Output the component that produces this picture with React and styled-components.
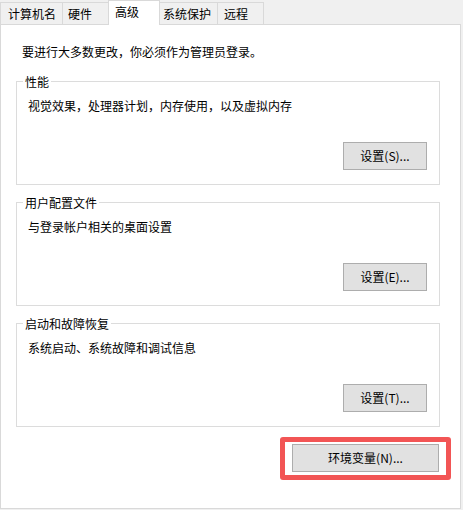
import React from 'react';
import styled, { createGlobalStyle } from 'styled-components';

const GlobalStyle = createGlobalStyle`
  html, body {
    margin: 0;
    padding: 0;
    background: #f0f0f0;
  }
  body {
    font-family: "Noto Sans CJK SC", "Noto Sans", sans-serif;
    font-size: 12px;
    color: #000;
    width: 463px;
    height: 510px;
    overflow: hidden;
  }
`;

// Tab strip across the top
const TabBar = styled.div`
  display: flex;
  align-items: flex-end;
  height: 24px;
`;

const Tab = styled.div`
  box-sizing: border-box;
  width: ${(p) => p.$width}px;
  margin-left: ${(p) => (p.$first ? 0 : -1)}px;
  padding-left: ${(p) => p.$pad ?? 6}px;
  border: 1px solid #d9d9d9;
  border-bottom: none;
  white-space: nowrap;
  background: ${(p) => (p.$active ? '#fff' : '#f0f0f0')};
  height: ${(p) => (p.$active ? 25 : 22)}px;
  line-height: ${(p) => (p.$active ? 22 : 21)}px;
  margin-bottom: ${(p) => (p.$active ? -1 : 0)}px;
  position: relative;
  z-index: ${(p) => (p.$active ? 1 : 0)};
`;

const Panel = styled.div`
  box-sizing: border-box;
  width: 461px;
  height: 485px;
  background: #fff;
  border: 1px solid #d9d9d9;
  padding: 19px 20px 0 15px;
  display: flex;
  flex-direction: column;
`;

const Intro = styled.div`
  line-height: 16px;
  padding-left: 6px;
  margin-bottom: 13px;
`;

const Group = styled.fieldset`
  margin: 0 0 ${(p) => (p.$last ? 0 : 9)}px 0;
  padding: 0 12px 14px 6px;
  min-width: 0;
  border: 1px solid #dcdcdc;
  display: flex;
  flex-direction: column;
`;

const Legend = styled.legend`
  padding: 0 2px;
  line-height: 17px;
`;

const Desc = styled.div`
  margin-top: 8px;
  padding-left: 5px;
  line-height: 16px;
`;

const Button = styled.button`
  box-sizing: border-box;
  height: 28px;
  width: ${(p) => p.$width || 84}px;
  background: #e1e1e1;
  border: 1px solid #adadad;
  border-radius: 0;
  font-family: inherit;
  font-size: 12px;
  color: #000;
  padding: 0;
  line-height: 26px;
`;

const GroupButton = styled(Button)`
  align-self: flex-end;
  margin-top: 28px;
`;

// red annotation frame around the env button
const Highlight = styled.div`
  align-self: flex-end;
  margin: 10px -11px 0 0;
  border: 5px solid #f25555;
  border-radius: 3px;
  padding: 2px 7px 3px 7px;
  display: flex;
`;

const tabs = [
  { label: '计算机名', width: 63, pad: 7 },
  { label: '硬件', width: 47, pad: 5 },
  { label: '高级', width: 52, active: true },
  { label: '系统保护', width: 59, pad: 3 },
  { label: '远程', width: 47 },
];

const groups = [
  { title: '性能', desc: '视觉效果，处理器计划，内存使用，以及虚拟内存', button: '设置(S)...' },
  { title: '用户配置文件', desc: '与登录帐户相关的桌面设置', button: '设置(E)...' },
  { title: '启动和故障恢复', desc: '系统启动、系统故障和调试信息', button: '设置(T)...' },
];

const App = () => (
  <>
    <GlobalStyle />
    <TabBar>
      {tabs.map((t, i) => (
        <Tab key={t.label} $first={i === 0} $width={t.width} $pad={t.pad} $active={t.active}>
          {t.label}
        </Tab>
      ))}
    </TabBar>
    <Panel>
      <Intro>要进行大多数更改，你必须作为管理员登录。</Intro>
      {groups.map((g, i) => (
        <Group key={g.title} $last={i === groups.length - 1}>
          <Legend>{g.title}</Legend>
          <Desc>{g.desc}</Desc>
          <GroupButton>{g.button}</GroupButton>
        </Group>
      ))}
      <Highlight>
        <Button $width={147}>环境变量(N)...</Button>
      </Highlight>
    </Panel>
  </>
);

export default App;
